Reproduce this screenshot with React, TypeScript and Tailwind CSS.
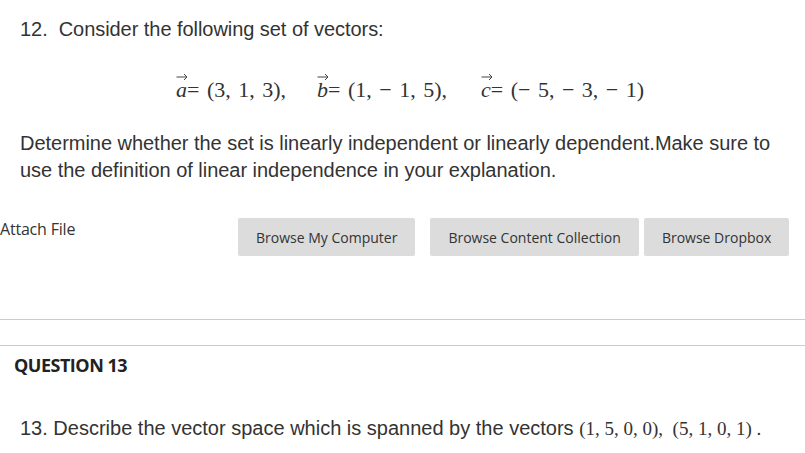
import type { ReactNode } from 'react'

const arial = { fontFamily: '"Liberation Sans", Arial, sans-serif' }

function Vec({ letter }: { letter: string }) {
  return (
    <span className="relative inline-block italic">
      <svg
        className="absolute -top-[4px] left-0 h-[7px] w-[12px]"
        viewBox="0 0 12 7"
        fill="none"
        stroke="#444"
        strokeWidth="1"
      >
        <path d="M0.5 4 H11 M8 1 L11 4 L8 7" />
      </svg>
      {letter}
    </span>
  )
}

function Button({ children, className }: { children: ReactNode; className?: string }) {
  return (
    <button
      className={
        'h-[38px] rounded-[2px] bg-[#dcdcdc] px-[18px] font-["Open_Sans"] text-[14px] text-[#333] ' +
        (className ?? '')
      }
    >
      {children}
    </button>
  )
}

export default function App() {
  return (
    <div className="h-[453px] w-[805px] overflow-hidden bg-white text-[#333]">
      <div className="pl-5 pt-[15px]" style={arial}>
        <p className="text-[20px] leading-[28px] tracking-[-0.05px]">12.&nbsp; Consider the following set of vectors:</p>
        <p className="mt-[34px] flex pl-[156px] font-['Liberation_Serif'] text-[22px] leading-[26px] whitespace-pre [word-spacing:2px]">
          <span>
            <Vec letter="a" />= (3, 1, 3),
          </span>
          <span className="ml-[31px]">
            <Vec letter="b" />= (1, − 1, 5),
          </span>
          <span className="ml-[34px]">
            <Vec letter="c" />= (− 5, − 3, − 1)
          </span>
        </p>
        <p className="mt-[27px] text-[20px] leading-[27px] tracking-[-0.03px]">
          Determine whether the set is linearly independent or linearly dependent.Make sure to
          <br />
          use the definition of linear independence in your explanation.
        </p>
      </div>

      <div className="mt-[34px] flex items-start font-['Open_Sans']">
        <div className="w-[238px] pt-[1px] text-[16px] leading-[20px] tracking-[-0.2px]">Attach File</div>
        <Button>Browse My Computer</Button>
        <Button className="ml-[15px]">Browse Content Collection</Button>
        <Button className="ml-[5px]">Browse Dropbox</Button>
      </div>

      <div className="mt-[63px] border-t border-[#cccccc]" />
      <div className="mt-[25px] border-t border-[#cccccc]" />

      <h2 className="pl-[14px] pt-[7px] font-['Open_Sans'] text-[18px] leading-[24px] font-bold tracking-[-0.5px] text-[#222]">
        QUESTION 13
      </h2>

      <p className="mt-[37px] pl-5 text-[20px] leading-[28px]" style={arial}>
        13. Describe the vector space which is spanned by the vectors{' '}
        <span className="font-['Liberation_Serif'] text-[19px] whitespace-pre">(1, 5, 0, 0),  (5, 1, 0, 1) .</span>
      </p>
    </div>
  )
}
